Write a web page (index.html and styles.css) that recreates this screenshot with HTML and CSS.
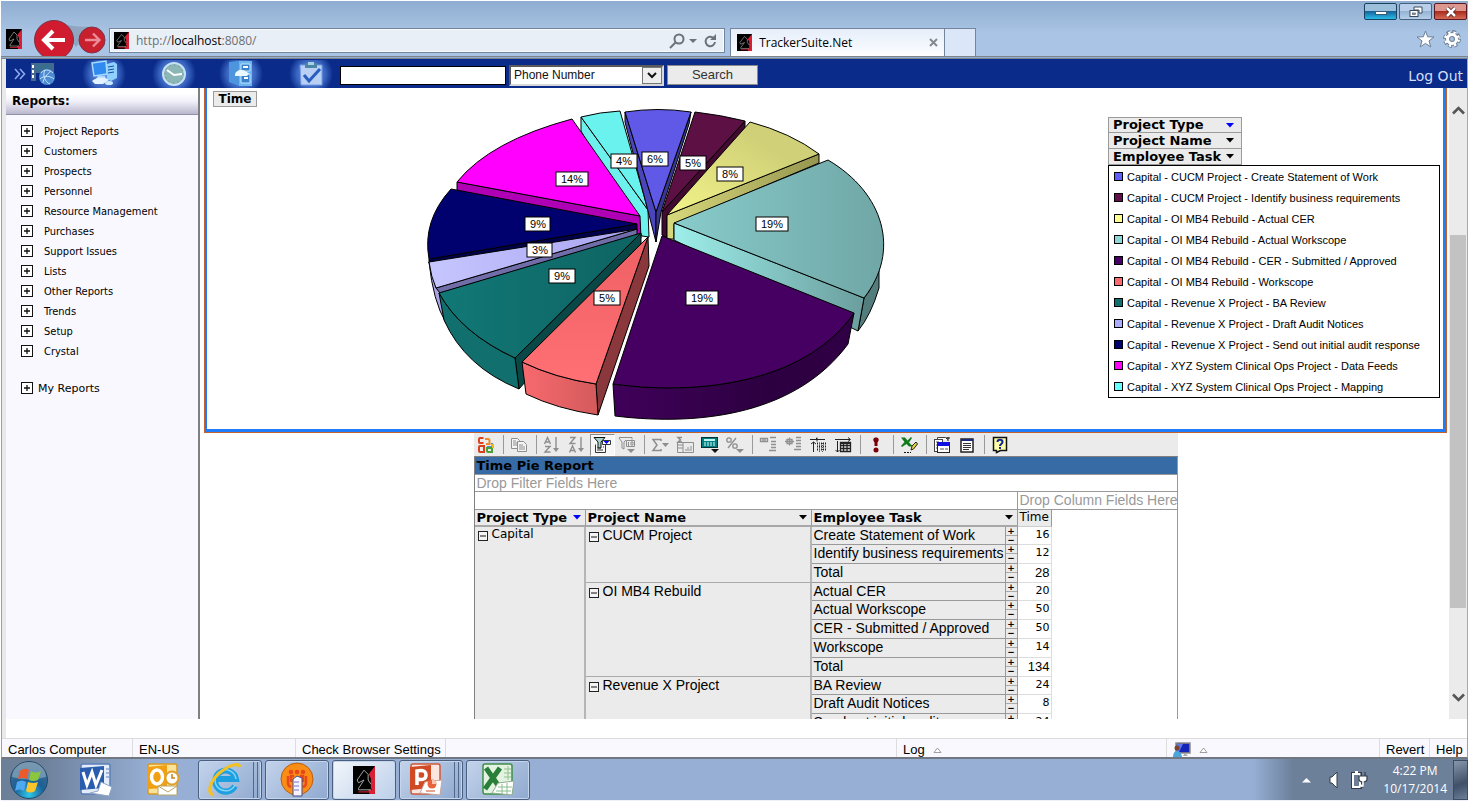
FILE: index.html
```html
<!DOCTYPE html>
<html lang="en">
<head>
<meta charset="utf-8">
<title>TrackerSuite.Net</title>
<link rel="stylesheet" href="styles.css">
</head>
<body>
<svg class="defs" aria-hidden="true">
  <symbol id="knight" viewBox="0 0 16 20">
    <rect width="16" height="20" fill="#000"/><path d="M16 0L9 9l3 11h4z" fill="#d81f33"/>
    <path d="M4 17c0-3 3-4 3-7l-3 2-1-2 3-5 2-2 3 2 2 4v7l1 1H4z" fill="#000"/>
    <path d="M8 3L3 10l1 2 4-2-4 6v1h9M8 3l3 3v4l2 3" fill="none" stroke="#a8a8a8" stroke-width=".7"/>
    <path d="M4 18.500h9" stroke="#d81f33" stroke-width=".8"/>
  </symbol>
  <symbol id="plus" viewBox="0 0 12 12"><rect x=".5" y=".5" width="11" height="11" fill="#fff" stroke="#111"/><path d="M3 6h6M6 3v6" stroke="#111" stroke-width="1.300"/></symbol>
  <symbol id="minus" viewBox="0 0 10 10"><rect x=".5" y=".5" width="9" height="9" fill="#f4f4f4" stroke="#222"/><path d="M2 5h6" stroke="#111"/></symbol>
  <symbol id="down" viewBox="0 0 8 5"><path d="M0 0h8L4 4.500z" fill="currentColor"/></symbol>
  <symbol id="updelta" viewBox="0 0 9 6"><path d="M1 5.500h7L4.500 1z" fill="#fff" stroke="#888" stroke-width=".8"/></symbol>
</svg>

<header class="browser">
  <div class="window-row">
    <button class="win win-min" aria-label="Minimize"><svg width="14" height="8" viewBox="0 0 14 8"><rect x="1.500" y="3.500" width="11" height="3" fill="#fff" stroke="#3b5a78"/></svg></button>
    <button class="win win-max" aria-label="Restore"><svg width="14" height="12" viewBox="0 0 14 12"><path d="M5 1h8v6h-3V4H5z" fill="#fff" stroke="#3c4a5c"/><rect x="1" y="4.500" width="8" height="6" fill="#fff" stroke="#3c4a5c"/><rect x="3.500" y="7" width="3" height="1.500" fill="#9ab" stroke="#3c4a5c" stroke-width=".6"/></svg></button>
    <button class="win win-close" aria-label="Close"><svg width="14" height="12" viewBox="0 0 14 12"><path d="M3 2l8 8M11 2l-8 8" stroke="#4a2020" stroke-width="4"/><path d="M3 2l8 8M11 2l-8 8" stroke="#fff" stroke-width="2.500"/></svg></button>
  </div>
  <div class="nav-row">
    <svg class="site-icon" width="16" height="20"><use href="#knight"/></svg>
    <svg class="nav-buttons" width="74" height="36" viewBox="0 0 74 36" role="img" aria-label="Back and forward">
      <path d="M24 1c12 7 23 5 35 6l-17 20z" fill="#90a5bf"/>
      <circle cx="20" cy="20" r="19.500" fill="#d01c2e" stroke="#7c3347"/>
      <path d="M31 20H11M19 11l-9 9 9 9" fill="none" stroke="#fff" stroke-width="4"/>
      <circle cx="58" cy="20" r="13" fill="#c8202f" stroke="#7c3347"/>
      <path d="M51 20h14M59 13.500l6.500 6.500-6.500 6.500" fill="none" stroke="#ec8d96" stroke-width="2.400"/>
    </svg>
    <form class="address">
      <svg width="15" height="17" viewBox="0 0 16 20" preserveAspectRatio="none"><use href="#knight"/></svg>
      <a class="url" href="#"><span>http://</span><b>localhost</b><span>:8080/</span></a>
      <svg width="50" height="18" viewBox="0 0 50 18" fill="none" stroke="#6d7178" stroke-width="2"><circle cx="11" cy="7" r="4.500"/><path d="M8 10l-6 6"/><path d="M21 7h8l-4 4z" fill="#6d7178" stroke="none"/><path d="M45.500 6A4.700 4.700 0 1 0 47 10"/><path d="M48 2v6h-6z" fill="#6d7178" stroke="none"/></svg>
    </form>
    <div class="tab">
      <svg width="15" height="17" viewBox="0 0 16 20" preserveAspectRatio="none"><use href="#knight"/></svg>
      <span>TrackerSuite.Net</span>
      <button class="tab-close" aria-label="Close tab"><svg width="9" height="9" viewBox="0 0 9 9"><path d="M1 1l7 7M8 1L1 8" stroke="#85898f" stroke-width="2"/></svg></button>
    </div>
    <button class="new-tab" aria-label="New tab"></button>
    <div class="tools">
      <svg width="19" height="18" viewBox="0 0 19 18"><path d="M9.500 1l2.200 5.800 6.300.2-5 3.900 1.800 6-5.300-3.500-5.300 3.500 1.800-6L1 7l6.300-.2z" fill="#fff" stroke="#6c7f96"/></svg>
      <svg width="18" height="18" viewBox="0 0 18 18"><circle cx="9" cy="9" r="6.700" fill="none" stroke="#6c7f96" stroke-width="4.400" stroke-dasharray="3.400 1.860"/><circle cx="9" cy="9" r="4.400" fill="none" stroke="#6c7f96" stroke-width="5"/><circle cx="9" cy="9" r="6.500" fill="none" stroke="#fff" stroke-width="3" stroke-dasharray="2.200 2.905" stroke-dashoffset="-.6"/><circle cx="9" cy="9" r="4.500" fill="none" stroke="#fff" stroke-width="3"/></svg>
    </div>
  </div>
</header>

<div class="app">
  <div class="app-bar">
    <button class="ico w20" aria-label="Expand"><svg width="12" height="12" viewBox="0 0 12 12"><path d="M1 1l4.500 5L1 11M6 1l4.500 5L6 11" fill="none" stroke="#8fa8ec" stroke-width="1.600"/></svg></button>
    <button class="ico w26" aria-label="Projects"><svg width="26" height="26" viewBox="0 0 26 26"><path d="M1 2h23v10H6v8H1z" fill="#47698f"/><path d="M5 3h17l-2 8H7z" fill="#3a6d8f"/><path d="M3 4v15" stroke="#fff" stroke-width="2" stroke-dasharray="3 2"/><circle cx="17" cy="16" r="8" fill="#4d8ad0"/><path d="M11 12c3-4 8-4 12 0M10 18c4-4 11-3 14 0M15 9c-3 5 0 12 5 14M21 10c-4 3-8 8-8 12" fill="none" stroke="#c4e4ff"/></svg></button>
    <button class="ico lit w96" aria-label="Customers"><svg width="30" height="28" viewBox="0 0 30 28"><path d="M3 3l14-2 1 13-13 2z" fill="#2f8bf0" stroke="#a8dcff" stroke-width="1.500"/><path d="M18 4l7-2 3 2v14l-6 3-4-2z" fill="#8fd2ff"/><path d="M19 7l6-1M19 10l6-1M19 13l6-1" stroke="#164d9d"/><path d="M9 16h7l1 3H7z" fill="#b4dcff"/><path d="M3 21c5-4 13-4 17-1l-6 4H6z" fill="#e2f3ff"/><ellipse cx="20" cy="23" rx="4" ry="2" fill="#cbe9ff"/></svg></button>
    <button class="ico lit w44" aria-label="Time"><svg width="26" height="26" viewBox="0 0 26 26"><circle cx="13" cy="13" r="11" fill="#8db7b6" stroke="#c5e1f4" stroke-width="2"/><circle cx="13" cy="13" r="9" fill="none" stroke="#5b8797" stroke-dasharray="1 3.700"/><path d="M6 9l7 5 8-1" fill="none" stroke="#fff" stroke-width="2"/></svg></button>
    <button class="ico lit w90" aria-label="Documents"><svg width="28" height="28" viewBox="0 0 28 28"><path d="M2 2l10-1v25l-10-4z" fill="#4d96dd"/><path d="M12 1h13v25H12z" fill="#6cb5ed"/><path d="M14 4h9v7h-9zM14 14h9v9h-9z" fill="#3982cb" stroke="#c4e7ff"/><path d="M16 7h5M17 18h4" stroke="#fff" stroke-width="2"/><path d="M8 15c0-3 3-5 6-5 4 0 6 2 8 4l-2 2H8z" fill="#e9f8ff"/></svg></button>
    <button class="ico lit w50" aria-label="Tasks"><svg width="26" height="26" viewBox="0 0 26 26"><path d="M2 4h22v20H3z" fill="#b9cff3" stroke="#6f9be3"/><path d="M7 2h12v5H7z" fill="#4d86a4"/><path d="M10 1h6v3h-6z" fill="#a7d2e4"/><path d="M6 14l5 6L22 8" fill="none" stroke="#275dc0" stroke-width="3"/></svg></button>
    <input class="search-text" type="text" aria-label="Search text">
    <div class="select-wrap">
      <select aria-label="Search field"><option>Phone Number</option></select>
      <span class="select-arrow"><svg width="10" height="7" viewBox="0 0 10 7"><path d="M1 1l4 4 4-4" fill="none" stroke="#111" stroke-width="2"/></svg></span>
    </div>
    <button class="search-button">Search</button>
    <a class="logout" href="#">Log Out</a>
  </div>

  <div class="main">
    <nav class="sidebar">
      <h2>Reports:</h2>
      <ul>
        <li><button aria-label="Expand"><svg><use href="#plus"/></svg></button><a href="#">Project Reports</a></li>
        <li><button aria-label="Expand"><svg><use href="#plus"/></svg></button><a href="#">Customers</a></li>
        <li><button aria-label="Expand"><svg><use href="#plus"/></svg></button><a href="#">Prospects</a></li>
        <li><button aria-label="Expand"><svg><use href="#plus"/></svg></button><a href="#">Personnel</a></li>
        <li><button aria-label="Expand"><svg><use href="#plus"/></svg></button><a href="#">Resource Management</a></li>
        <li><button aria-label="Expand"><svg><use href="#plus"/></svg></button><a href="#">Purchases</a></li>
        <li><button aria-label="Expand"><svg><use href="#plus"/></svg></button><a href="#">Support Issues</a></li>
        <li><button aria-label="Expand"><svg><use href="#plus"/></svg></button><a href="#">Lists</a></li>
        <li><button aria-label="Expand"><svg><use href="#plus"/></svg></button><a href="#">Other Reports</a></li>
        <li><button aria-label="Expand"><svg><use href="#plus"/></svg></button><a href="#">Trends</a></li>
        <li><button aria-label="Expand"><svg><use href="#plus"/></svg></button><a href="#">Setup</a></li>
        <li><button aria-label="Expand"><svg><use href="#plus"/></svg></button><a href="#">Crystal</a></li>
        <li class="mine"><button aria-label="Expand"><svg><use href="#plus"/></svg></button><a href="#">My Reports</a></li>
      </ul>
    </nav>

    <div class="content">
      <section class="chart">
        <button class="field time-field">Time</button>
        <svg class="pie" width="470" height="332" viewBox="421 92 470 332" role="img" aria-label="Time by task pie chart">
          <defs>
            <linearGradient id="gPurple"><stop offset="0" stop-color="#40005a"/><stop offset=".65" stop-color="#2c0040"/><stop offset="1" stop-color="#300045"/></linearGradient>
            <linearGradient id="gAqua"><stop offset="0" stop-color="#88cccb"/><stop offset="1" stop-color="#70a6a6"/></linearGradient>
            <linearGradient id="gAquaSide"><stop offset="0" stop-color="#9deeea"/><stop offset="1" stop-color="#6b9e9e"/></linearGradient>
            <linearGradient id="gYellow" x1="0" y1="1" x2="1" y2="0"><stop offset="0" stop-color="#f4f48a"/><stop offset=".7" stop-color="#d0d078"/></linearGradient>
            <linearGradient id="gYellowSide"><stop offset="0" stop-color="#d8d87c"/><stop offset="1" stop-color="#96964f"/></linearGradient>
            <linearGradient id="gLav"><stop offset="0" stop-color="#c6c6ff"/><stop offset="1" stop-color="#a9a4f0"/></linearGradient>
            <linearGradient id="gSalmon" x1="0" y1="0" x2="0" y2="1"><stop offset="0" stop-color="#ee6064"/><stop offset="1" stop-color="#ff7074"/></linearGradient>
            <linearGradient id="gSalmonWall"><stop offset="0" stop-color="#f86a6e"/><stop offset="1" stop-color="#d35a5c"/></linearGradient>
            <linearGradient id="gTeal"><stop offset="0" stop-color="#117876"/><stop offset="1" stop-color="#0e6462"/></linearGradient>
          </defs>
          <g stroke="#000" stroke-width="1" stroke-linejoin="round">
            <path d="M582 117L649 210L650 237L643 236L582 131z" fill="#6ef0ec"/>
            <path d="M582 117Q601 112 621 111L649 210z" fill="#6af2ee"/>
            <path d="M626 112L657 212V242L626 122z" fill="#4a45ba"/>
            <path d="M692 112L657 212V242L662 212L690 124z" fill="#393692"/>
            <path d="M626 112Q659 107 692 112L657 212z" fill="#6059e8"/>
            <path d="M746 121V129L668 217V238L663 235V212z" fill="#420a30"/>
            <path d="M696 112Q722 115 746 121L663 212z" fill="#5c1044"/>
            <path d="M668 215L820 154V163L675 224V239H668z" fill="url(#gYellowSide)"/>
            <path d="M668 215L751 122Q792 133 820 154z" fill="url(#gYellow)"/>
            <path d="M865 298Q874 288 880 267V288Q872 315 859 331z" fill="#527d7c"/>
            <path d="M675 223L865 298L859 331L675 240z" fill="url(#gAquaSide)"/>
            <path d="M675 223L829 160C885 193 902 251 865 298z" fill="url(#gAqua)"/>
            <path d="M458 182L641 216L642 238L458 190z" fill="#b000b5"/>
            <path d="M458 182Q491 141 573 119L641 216z" fill="#ff00ff"/>
            <path d="M430 259L638 224V231L430 263z" fill="#00004b"/>
            <path d="M452 189L638 224L430 259Q423 221 452 189z" fill="#00006e"/>
            <path d="M430 262L437 288L441 292L447 323Q434 301 430 262z" fill="#a8a4e6"/>
            <path d="M437 288L638 229V235L441 293z" fill="#706da8"/>
            <path d="M430 262L638 229L437 288Q432 277 430 262z" fill="url(#gLav)"/>
            <path d="M516 358L642 233V250L520 389z" fill="#0a4847"/>
            <path d="M440 293Q462 333 516 358L520 389Q466 367 445 320z" fill="#11706e"/>
            <path d="M440 293L642 233L516 358Q462 333 440 293z" fill="url(#gTeal)"/>
            <path d="M597 384L649 237L650 266L599 415z" fill="#8a383b"/>
            <path d="M523 362Q556 378 597 384L599 415Q558 409 527 394z" fill="url(#gSalmonWall)"/>
            <path d="M649 237L523 362Q556 378 597 384z" fill="url(#gSalmon)"/>
            <path d="M614 384C711 397 810 378 855 313L849 344C799 412 706 427 616 416z" fill="url(#gPurple)"/>
            <path d="M663 236L855 313C810 378 711 397 614 384z" fill="#450062"/>
          </g>
          <g class="pie-tags">
            <rect x="612" y="154" width="26" height="14"/><text x="625" y="165">4%</text>
            <rect x="643" y="152" width="26" height="14"/><text x="656" y="163">6%</text>
            <rect x="681" y="156" width="26" height="14"/><text x="694" y="167">5%</text>
            <rect x="718" y="167" width="26" height="14"/><text x="731" y="178">8%</text>
            <rect x="757" y="217" width="32" height="14"/><text x="773" y="228">19%</text>
            <rect x="687" y="291" width="32" height="14"/><text x="703" y="302">19%</text>
            <rect x="557" y="172" width="32" height="14"/><text x="573" y="183">14%</text>
            <rect x="526" y="217" width="25" height="14"/><text x="539" y="228">9%</text>
            <rect x="528" y="243" width="25" height="14"/><text x="541" y="254">3%</text>
            <rect x="550" y="269" width="26" height="14"/><text x="563" y="280">9%</text>
            <rect x="595" y="291" width="26" height="14"/><text x="608" y="302">5%</text>
          </g>
        </svg>
        <div class="legend">
          <div class="legend-fields">
            <button class="field">Project Type<svg class="arrow blue"><use href="#down"/></svg></button>
            <button class="field">Project Name<svg class="arrow"><use href="#down"/></svg></button>
            <button class="field">Employee Task<svg class="arrow"><use href="#down"/></svg></button>
          </div>
          <ul class="legend-list">
            <li><i class="k1"></i>Capital - CUCM Project - Create Statement of Work</li>
            <li><i class="k2"></i>Capital - CUCM Project - Identify business requirements</li>
            <li><i class="k3"></i>Capital - OI MB4 Rebuild - Actual CER</li>
            <li><i class="k4"></i>Capital - OI MB4 Rebuild - Actual Workscope</li>
            <li><i class="k5"></i>Capital - OI MB4 Rebuild - CER - Submitted / Approved</li>
            <li><i class="k6"></i>Capital - OI MB4 Rebuild - Workscope</li>
            <li><i class="k7"></i>Capital - Revenue X Project - BA Review</li>
            <li><i class="k8"></i>Capital - Revenue X Project - Draft Audit Notices</li>
            <li><i class="k9"></i>Capital - Revenue X Project - Send out initial audit response</li>
            <li><i class="k10"></i>Capital - XYZ System Clinical Ops Project - Data Feeds</li>
            <li><i class="k11"></i>Capital - XYZ System Clinical Ops Project - Mapping</li>
          </ul>
        </div>
      </section>

      <section class="pivot">
        <div class="pivot-tools">
          <button aria-label="About"><svg width="18" height="18" viewBox="0 0 18 18" fill="none" stroke-width="2"><path d="M6.500 2H3q-1 0-1 1v3q0 1 1 1h3.500" stroke="#e0431f"/><path d="M8 3h3q1.500 0 1.500 1.500V8H9" stroke="#f08a24"/><path d="M7 10H3q-1 0-1 1v4q0 1 1 1h4z" stroke="#d8411b"/><path d="M10 11h4M15 7v4" stroke="#3f8fe0"/><path d="M10 12v3q0 1 1 1h4v-4z" stroke="#4aa33a"/><path d="M14 9h2v3" stroke="#f4b81c"/></svg></button><i class="sep"></i>
          <button aria-label="Copy"><svg width="18" height="18" viewBox="0 0 18 18" fill="#f4f4f4" stroke="#8e8e8e"><path d="M1.500 2.500h6l2 2v8h-8z"/><path d="M7.500 5.500h6l3 3v7h-9z"/><path d="M3 5h3M3 7h4M3 9h4M9 9h4M9 11h6M9 13h6"/></svg></button><i class="sep"></i>
          <button aria-label="Sort ascending"><svg width="18" height="18" viewBox="0 0 18 18" fill="none" stroke="#8e8e8e" stroke-width="1.400"><path d="M1.500 8l3-6.500L7.500 8M2.500 6h4M2 10.500h5l-5 5.500h5.500M13 1v12"/><path d="M10 12h6l-3 4z" fill="#8e8e8e" stroke="none"/></svg></button>
          <button aria-label="Sort descending"><svg width="18" height="18" viewBox="0 0 18 18" fill="none" stroke="#8e8e8e" stroke-width="1.400"><path d="M2 1.500h5L2 7.500h5.500M1.500 16.500l3-6.500 3 6.500M2.500 14.500h4M13 1v12"/><path d="M10 12h6l-3 4z" fill="#8e8e8e" stroke="none"/></svg></button>
          <button class="on" aria-label="AutoFilter"><svg width="18" height="18" viewBox="0 0 18 18"><path d="M1 1.500h11L8 6v6H5V6z" fill="#a9d2cc" stroke="#111"/><path d="M9.500 4.500h8v4h-8z" fill="#fff" stroke="#333"/><path d="M10.500 5h6l-3 3z" fill="#00f"/><path d="M2.500 8.500v8h10v-8" fill="none" stroke="#333"/><path d="M4 12h4M4 14h6M10 11h1" stroke="#333"/></svg></button>
          <button aria-label="Show top"><svg width="18" height="18" viewBox="0 0 18 18" fill="none" stroke="#8e8e8e"><path d="M1 1.500h13v2M1 2l3 4v6l2 1V6l2-2"/><path d="M8.500 4.500h8v6h-8zM10.500 6v4M13 6h2v3h-2z"/><path d="M9 13h8l-4 4z" fill="#8e8e8e" stroke="none"/></svg></button><i class="sep"></i>
          <button aria-label="AutoCalc"><svg width="18" height="18" viewBox="0 0 18 18"><path d="M10 5V3.500H2L6 9l-4 5.500h8V13" fill="none" stroke="#8e8e8e" stroke-width="1.500"/><path d="M11 7h7l-3.500 4z" fill="#8e8e8e"/></svg></button>
          <button aria-label="Subtotal"><svg width="18" height="18" viewBox="0 0 18 18" fill="none" stroke="#8e8e8e"><path d="M1.500 6.500h16v10h-16zM2 9h5M2 12h5M7 7v9"/><path d="M6 1.500H2L4.500 4 2 6h4" stroke-width="1.500"/><path d="M9 14h7M12 13v-2M15 13v-3"/></svg></button>
          <button aria-label="Calculated totals"><svg width="20" height="18" viewBox="0 0 20 18"><rect x="1.500" y="1.500" width="16" height="10" fill="#008080" stroke="#033"/><path d="M4 4h11" stroke="#bff5ef" stroke-width="2"/><path d="M4 7h11M4 9h11" stroke="#dff" stroke-dasharray="2 1"/><path d="M11 13h8l-4 4z" fill="#111"/></svg></button>
          <button aria-label="Show as"><svg width="20" height="18" viewBox="0 0 20 18" fill="none" stroke="#8e8e8e" stroke-width="1.300"><circle cx="4" cy="4" r="2.200"/><circle cx="10" cy="10" r="2.200"/><path d="M11 2L3 12"/><path d="M11 13h8l-4 4z" fill="#8e8e8e" stroke="none"/></svg></button><i class="sep"></i>
          <button aria-label="Collapse"><svg width="18" height="18" viewBox="0 0 18 18" fill="none" stroke="#909090"><path d="M1.500 2.500h7v3h-7zM4 3v2M6 3v2M11 1.500h6M12 5.500h5M12 8.500h5M12 11.500h5M10 14.500h7" stroke-width="1.300"/></svg></button>
          <button aria-label="Expand"><svg width="18" height="18" viewBox="0 0 18 18" fill="none" stroke="#909090"><path d="M1 5.500h9M5.500 1.500v8M3 3.500h5v4H3zM12 1.500h5M12 4.500h5M12 7.500h5M12 10.500h5M10 13.500h7" stroke-width="1.300"/></svg></button>
          <button aria-label="Hide details"><svg width="18" height="18" viewBox="0 0 18 18" fill="none" stroke="#222"><path d="M1 3.500h15M4.500 6v10M2 8l2.500-2L7 8"/><path d="M8 1.500v4M6.500 3.500l1.500-1.500"/><path d="M8 7.500h9M8 10.500h9M8 13.500h9" stroke-width="2" stroke-dasharray="1 1"/><path d="M10.500 7v9M13.500 7v9" stroke="#555" stroke-dasharray="1 1"/></svg></button>
          <button aria-label="Show details"><svg width="18" height="18" viewBox="0 0 18 18" fill="none" stroke="#222"><path d="M1 3.500h15M3.500 5v11M1.500 14l2 2 2-2M14 1.500l2.500 2-2.500 2"/><path d="M6.500 6.500h10v9h-10zM6 9.500h10M6 12.500h10M9.500 6v10M13 6v10" stroke-width="1.300"/><path d="M6 7h10" stroke-width="2"/></svg></button><i class="sep"></i>
          <button aria-label="Refresh"><svg width="10" height="18" viewBox="0 0 10 18"><path d="M5 1.500c3 0 3.500 2.500 1.500 5V10h-3V6.500C1.500 4 2 1.500 5 1.500z" fill="#7a0008"/><circle cx="5" cy="14" r="2.500" fill="#7a0008"/></svg></button><i class="sep"></i>
          <button aria-label="Export to Excel"><svg width="18" height="18" viewBox="0 0 18 18"><path d="M1 1.500h4l2.500 3L11 1l1 1-3 4.500 4 4H9L6.500 8 2 11l-1-1 3.500-4z" fill="#117a1c"/><path d="M11 14l1-4 4-4 1.500 2-4 5z" fill="#e8d23b" stroke="#222"/><path d="M4 16.500h7" stroke="#111" stroke-dasharray="2 1"/></svg></button><i class="sep"></i>
          <button aria-label="Field list"><svg width="18" height="18" viewBox="0 0 18 18"><path d="M1.500 4.500h3v-3h8l2 2" fill="#fff" stroke="#444"/><rect x="1.500" y="3.500" width="8" height="12" fill="#fff" stroke="#444"/><path d="M3 6h3M3 9h2M3 12h2" stroke="#555"/><rect x="4.500" y="6.500" width="12" height="10" fill="#fff" stroke="#222"/><path d="M4 8h13" stroke="#1010e0" stroke-width="4"/><path d="M7 13h8" stroke="#555" stroke-dasharray="4 1"/><path d="M13 2h4M15 1v4" stroke="#111"/></svg></button>
          <button aria-label="Commands"><svg width="14" height="16" viewBox="0 0 14 16"><rect x="1" y="2" width="12" height="13" fill="#fff" stroke="#222" stroke-width="1.500"/><path d="M1 3h12" stroke="#1a2a7a" stroke-width="2"/><path d="M3 6.500h8M3 8.500h8M3 10.500h8M3 12.500h6" stroke="#333"/></svg></button><i class="sep"></i>
          <button aria-label="Help"><svg width="16" height="18" viewBox="0 0 16 18"><path d="M1.500 1.500h13v13h-6l-4 2v-2h-3z" fill="#ffffa8" stroke="#111" stroke-width="1.500"/><path d="M5.500 6c0-3 5-3 5 0 0 2-2.500 2-2.500 4M8 11v2" fill="none" stroke="#12259a" stroke-width="2"/></svg></button>
        </div>
        <table>
          <colgroup><col class="c-type"><col class="c-name"><col class="c-task"><col class="c-pm"><col class="c-time"><col></colgroup>
          <thead>
            <tr class="title"><th colspan="6">Time Pie Report</th></tr>
            <tr class="drop"><td colspan="6">Drop Filter Fields Here</td></tr>
            <tr class="drop cols"><td colspan="4"></td><td colspan="2">Drop Column Fields Here</td></tr>
            <tr class="heads">
              <th><div>Project Type<svg class="arrow blue"><use href="#down"/></svg></div></th>
              <th><div>Project Name<svg class="arrow"><use href="#down"/></svg></div></th>
              <th colspan="2"><div>Employee Task<svg class="arrow"><use href="#down"/></svg></div></th>
              <td class="time">Time</td><td class="rest"></td>
            </tr>
          </thead>
          <tbody>
            <tr class="first"><td class="type" rowspan="11"><button aria-label="Collapse"><svg><use href="#minus"/></svg></button>Capital</td><td class="name" rowspan="3"><button aria-label="Collapse"><svg><use href="#minus"/></svg></button>CUCM Project</td><td class="member">Create Statement of Work</td><td class="pm"><button>+</button><button>−</button></td><td class="num">16</td><td class="rest" rowspan="11"></td></tr>
            <tr><td class="member">Identify business requirements</td><td class="pm"><button>+</button><button>−</button></td><td class="num">12</td></tr>
            <tr><td class="member">Total</td><td class="pm"><button>+</button><button>−</button></td><td class="num total">28</td></tr>
            <tr class="first"><td class="name" rowspan="5"><button aria-label="Collapse"><svg><use href="#minus"/></svg></button>OI MB4 Rebuild</td><td class="member">Actual CER</td><td class="pm"><button>+</button><button>−</button></td><td class="num">20</td></tr>
            <tr><td class="member">Actual Workscope</td><td class="pm"><button>+</button><button>−</button></td><td class="num">50</td></tr>
            <tr><td class="member">CER - Submitted / Approved</td><td class="pm"><button>+</button><button>−</button></td><td class="num">50</td></tr>
            <tr><td class="member">Workscope</td><td class="pm"><button>+</button><button>−</button></td><td class="num">14</td></tr>
            <tr><td class="member">Total</td><td class="pm"><button>+</button><button>−</button></td><td class="num total">134</td></tr>
            <tr class="first"><td class="name" rowspan="3"><button aria-label="Collapse"><svg><use href="#minus"/></svg></button>Revenue X Project</td><td class="member">BA Review</td><td class="pm"><button>+</button><button>−</button></td><td class="num">24</td></tr>
            <tr><td class="member">Draft Audit Notices</td><td class="pm"><button>+</button><button>−</button></td><td class="num">8</td></tr>
            <tr><td class="member">Send out initial audit</td><td class="pm"><button>+</button><button>−</button></td><td class="num">24</td></tr>
          </tbody>
        </table>
      </section>
    </div>

    <div class="scrollbar">
      <button aria-label="Scroll up"><svg width="13" height="9" viewBox="0 0 13 9"><path d="M1 7.500l5.500-5.500L12 7.500" fill="none" stroke="#555" stroke-width="2.600"/></svg></button>
      <i class="before"></i><i class="thumb"></i><i class="after"></i>
      <button aria-label="Scroll down"><svg width="13" height="9" viewBox="0 0 13 9"><path d="M1 1.500l5.500 5.500L12 1.500" fill="none" stroke="#555" stroke-width="2.600"/></svg></button>
    </div>
  </div>
</div>

<footer class="status">
  <span class="s1">Carlos Computer</span>
  <span class="s2">EN-US</span>
  <span class="s3">Check Browser Settings</span>
  <span class="s4"></span>
  <span class="s5">Log <svg width="9" height="6"><use href="#updelta"/></svg></span>
  <span class="s6"><svg width="18" height="15" viewBox="0 0 18 15"><rect x="3" y="1" width="14" height="10" fill="#1424b8" stroke="#8e8f86" stroke-width="1.500"/><path d="M4 2h6l-4 8H4z" fill="#5b75f0"/><path d="M12 11l3 3h-5z" fill="#aaa"/><circle cx="4" cy="6" r="2.500" fill="#7a4528"/><path d="M0 15c0-8 8-8 9 0z" fill="#4aa6da"/></svg><svg width="9" height="6"><use href="#updelta"/></svg></span>
  <a class="s7" href="#">Revert</a>
  <a class="s8" href="#">Help</a>
</footer>

<div class="taskbar">
  <button class="start" aria-label="Start"><svg width="40" height="40" viewBox="0 0 40 40">
    <defs><radialGradient id="orb" cx=".5" cy=".9" r=".9"><stop offset="0" stop-color="#2ec8ea"/><stop offset=".45" stop-color="#1b6098"/><stop offset="1" stop-color="#4a6f8d"/></radialGradient></defs>
    <circle cx="20" cy="20" r="18.500" fill="url(#orb)" stroke="#274a6b"/><path d="M3 17a17 15 0 0 1 34 0q-17 5-34 0z" fill="#b8cbd8" opacity=".45"/>
    <path d="M11 11q5-4 9-1l-2 9q-4-2-9 0z" fill="#ec5a2b"/><path d="M22 11q5 3 10 0l-3 9q-5 2-9 0z" fill="#8cc63f"/><path d="M8 22q5-3 9 0l-2 9q-5-3-9 0z" fill="#4fa8f0"/><path d="M19 22q5 2 10 0l-3 9q-5 3-9 0z" fill="#fcc52c"/></svg></button>
  <button class="pin" aria-label="Word"><svg width="34" height="34" viewBox="0 0 34 34"><rect x="2" y="1" width="29" height="30" rx="2" fill="#e3ecf8" stroke="#5b7fb8" stroke-width="1.500"/><path d="M1 5l24-2v22L1 27z" fill="#2b5daf"/><path d="M4 9l4 13 5-13 4 13 6-15" fill="none" stroke="#fff" stroke-width="3"/><path d="M27 6h3M27 10h3M27 14h3" stroke="#5d83bd"/><path d="M22 19l11 5-3 9-19-3 8-2z" fill="#fff" stroke="#8fa5c8"/></svg></button>
  <button class="pin last" aria-label="Outlook"><svg width="34" height="34" viewBox="0 0 34 34"><rect x="2" y="1" width="29" height="30" rx="2" fill="#fbe29a" stroke="#d99a1c" stroke-width="1.500"/><path d="M1 4l20-2v23L1 26z" fill="#f0a012"/><ellipse cx="11" cy="14" rx="5.500" ry="7" fill="none" stroke="#fff" stroke-width="3.500"/><path d="M12 23h19v9H12z" fill="#fff" stroke="#b9a46b"/><path d="M12 23l10 6 9-6" fill="none" stroke="#b9a46b"/><circle cx="26" cy="15" r="6.500" fill="#fff" stroke="#e0a02c" stroke-width="2"/><path d="M26 11v4h3" fill="none" stroke="#c5831b" stroke-width="1.500"/></svg></button>
  <button class="task stack" aria-label="Internet Explorer"><svg width="34" height="36" viewBox="0 0 34 36"><path d="M27 24a10.500 10.500 0 1 1 1-7H10" fill="none" stroke="#1e9fe0" stroke-width="6"/><path d="M27 23a10.500 10.500 0 1 1 1-6" fill="none" stroke="#7fd6fa" stroke-width="1.500"/><path d="M5 33C-2 30 3 17 14 9c9-7 17-8 18-4" fill="none" stroke="#f4c022" stroke-width="3"/></svg></button>
  <button class="task" aria-label="Remote tool"><svg width="34" height="36" viewBox="0 0 34 36"><circle cx="17" cy="17" r="16" fill="#f98d16" stroke="#b65f10"/><g fill="#e8471b"><circle cx="11" cy="10" r="2.300"/><circle cx="17" cy="10" r="2.300"/><circle cx="23" cy="10" r="2.300"/></g><path d="M8 14v7q0 3 3 4M14 14h-3v6M26 14v7q0 3-3 4M20 14h3v6" fill="none" stroke="#e8471b" stroke-width="2.500"/><path d="M13 17l4-3 5 2v18h-9z" fill="#f4f3ff" stroke="#444b85"/><path d="M14 20h5M14 24h5M14 28h5" stroke="#77c"/></svg></button>
  <button class="task active" aria-label="TrackerSuite"><svg width="22" height="28" viewBox="0 0 16 20" preserveAspectRatio="none"><use href="#knight"/></svg></button>
  <button class="task stack" aria-label="PowerPoint"><svg width="34" height="34" viewBox="0 0 34 34"><rect x="2" y="1" width="29" height="30" rx="2" fill="#fbe6df" stroke="#d0583a" stroke-width="1.500"/><path d="M1 4l21-2v23L1 27z" fill="#d04a25"/><path d="M8 22V8q9-2 9 4t-9 4" fill="none" stroke="#fff" stroke-width="3.500"/><path d="M16 19l17-2-2 15-20-2z" fill="#fff" stroke="#c6a79d"/><circle cx="23" cy="21" r="4.500" fill="#e8623c"/><path d="M23 21h4.500a4.500 4.500 0 0 0-4.500-4.500z" fill="#fbc4ae"/><path d="M17 28h9" stroke="#d04a25"/></svg></button>
  <button class="task" aria-label="Excel"><svg width="34" height="34" viewBox="0 0 34 34"><rect x="2" y="1" width="29" height="30" rx="2" fill="#e4f2e2" stroke="#3f8f48" stroke-width="1.500"/><path d="M23 6h7M23 10h7M23 14h7M27 3v14" stroke="#8cc28c"/><path d="M5 5l14 20M19 5L4 26" stroke="#2a7f38" stroke-width="5"/><path d="M17 20l16-2-2 14-20-2z" fill="#fff" stroke="#8cae8d"/><path d="M17 24h14M15 28h15M21 21v10M26 20v11" stroke="#8cbd8e"/></svg></button>
  <div class="tray">
    <svg width="9" height="6" viewBox="0 0 9 6"><path d="M0 5.500L4.500 1 9 5.500z" fill="#fff"/></svg>
    <svg class="speaker" width="9" height="18" viewBox="0 0 9 18"><path d="M1 6h2l5-5v16l-5-5H1z" fill="#fff" stroke="#333c4a"/></svg>
    <svg width="17" height="20" viewBox="0 0 17 20"><path d="M2 4h7v13H2z" fill="none" stroke="#333c4a" stroke-width="4"/><path d="M2 4h7v13H2z" fill="#6d7e95" stroke="#fff" stroke-width="2"/><path d="M4 2h3" stroke="#fff" stroke-width="2"/><path d="M8 6h8v3q0 3-4 3t-4-3zM10 2v4M14 2v4M12 12v5H9" fill="#fff" stroke="#333c4a" stroke-width="1.200"/><path d="M12 11v5H8" fill="none" stroke="#fff" stroke-width="1.500"/></svg>
    <time>4:22 PM<br>10/17/2014</time>
    <button class="desktop" aria-label="Show desktop"></button>
  </div>
</div>
</body>
</html>
```

FILE: styles.css
```css
* { box-sizing: border-box; }
html, body { height: 100%; }
body { margin: 0; padding: 1px 2px 0 1px; display: flex; flex-direction: column; background: #fff; color: #000; font-family: "Liberation Sans", Arial, sans-serif; font-size: 13px; overflow: hidden; }
button { padding: 0; margin: 0; border: 0; background: none; font: inherit; color: inherit; }
a { color: inherit; text-decoration: none; }
ul { list-style: none; margin: 0; padding: 0; }
svg { display: block; flex: none; }
.defs { position: absolute; width: 0; height: 0; }

/* browser frame */
.browser { flex: none; background: linear-gradient(#8fadd1, #a9c4e4 32px); border-bottom: 3px double #7b8288; font-family: "Open Sans", "Noto Sans", sans-serif; font-size: 12px; }
.window-row { height: 27px; display: flex; justify-content: flex-end; gap: 2px; padding: 2px 1px 0 0; }
.win { width: 33px; height: 17px; border: 1px solid #43607f; border-radius: 2px; display: flex; align-items: center; justify-content: center; }
.win-min { background: linear-gradient(#9cc0dc 45%, #15659c 50%, #27bce8); border-color: #17435f; }
.win-max { background: linear-gradient(#b9cee8 45%, #94b3d3 50%, #b6cfea); }
.win-close { background: linear-gradient(#dc9890 45%, #ab2c1d 50%, #d46a55); border-color: #5b1820; }
.nav-row { height: 28px; display: flex; align-items: flex-end; }
.site-icon { margin: 0 12px 7px 5px; }
.address { width: 42%; height: 25px; margin: 0 5px 3px 1px; padding: 0 6px 0 4px; display: flex; align-items: center; gap: 7px; background: #e8eff7; border: 1px solid #72859d; box-shadow: inset 0 0 0 1px #f8fbff; }
.url { flex: 1; display: flex; color: #6b6e72; }
.url b { font-weight: 400; color: #000; }
.tab { width: 215px; height: 28px; padding: 0 6px 0 6px; display: flex; align-items: center; gap: 7px; border: 1px solid #72859d; border-bottom: 0; background: linear-gradient(#e6eefa, #fcfdff); }
.tab span { flex: 1; }
.new-tab { width: 31px; height: 28px; background: #dbe6f9; border: 1px solid #72859d; border-left: 0; border-bottom: 0; }
.tools { margin-left: auto; height: 28px; padding: 2px 7px 0 0; display: flex; gap: 8px; }

/* application */
.app { flex: 1; min-height: 0; display: flex; flex-direction: column; border-left: 1px solid #a0a0a0; border-right: 1px solid #a9a9a9; padding: 0 0 19px 4px; background: linear-gradient(90deg, #e9e9ec 4px, #fff 4px); }
.app-bar { flex: none; height: 29px; display: flex; align-items: center; padding: 1px 4px 0 4px; background: #0a2b8a; }
.ico { height: 28px; display: flex; align-items: center; justify-content: center; }
.lit { background: radial-gradient(circle, #6f9be8 0, #3a66c2 14px, #0a2b8a 22px); }
.w20 { width: 20px; }
.w26 { width: 26px; }
.w44 { width: 44px; }
.w50 { width: 50px; }
.w90 { width: 90px; }
.w96 { width: 96px; }
.search-text { width: 166px; height: 19px; margin: 2px 3px 0 4px; border: 1px solid #000; background: #fff; padding: 0 3px; }
.select-wrap { position: relative; width: 155px; height: 21px; margin: 2px 3px 0 0; }
.select-wrap select { appearance: none; width: 100%; height: 100%; border: 2px solid; border-color: #5a5a5a #d8d8d8 #d8d8d8 #5a5a5a; border-radius: 0; background: #fff; padding: 0 3px; font: 12px "Liberation Sans", Arial, sans-serif; color: #111; }
.select-arrow { position: absolute; right: 2px; top: 2px; width: 20px; height: 17px; border: 1px solid #777; background: #eee; display: flex; align-items: center; justify-content: center; pointer-events: none; }
.search-button { width: 91px; height: 20px; margin-top: 2px; background: #ebebeb; border: 1px solid #8a8a8a; color: #333; font-size: 13px; padding-bottom: 1px; }
.logout { margin-left: auto; padding-top: 3px; font: 14px "DejaVu Sans", Verdana, sans-serif; color: #d4def5; }
.main { flex: 1; min-height: 0; display: flex; overflow: hidden; }

/* report tree */
.sidebar { flex: none; width: 194px; border-right: 2px solid #808080; background: #f9f8ff; }
.sidebar h2 { margin: 0; height: 27px; padding: 0 6px; border-bottom: 1px solid #9090a8; background: linear-gradient(#fff 20%, #f2f1fb 50%, #b9b7cc); font: bold 12px/26px "DejaVu Sans", Verdana, sans-serif; }
.sidebar ul { padding: 6px 0 0 15px; }
.sidebar li { height: 20px; display: flex; align-items: center; gap: 11px; font: 11px "DejaVu Sans Condensed", Tahoma, sans-serif; }
.sidebar li svg { width: 12px; height: 12px; }
.sidebar .mine { margin-top: 17px; gap: 5px; font-family: "DejaVu Sans", Verdana, sans-serif; }

/* chart */
.content { flex: 1; min-width: 0; margin: 0 2px 0 4px; }
.chart { height: 345px; display: flex; align-items: flex-start; padding: 0 6px 0 6px; border: solid #c5622b; border-width: 0 1px 1px; box-shadow: inset 2px 0 #1f7dfa, inset -3px 0 #1f7dfa, inset 0 -3px #1f7dfa; }
.field { display: flex; align-items: center; justify-content: space-between; height: 16px; padding: 0 7px 0 4px; background: #ebebeb; border: 1px solid #9b9b9b; font: bold 13px/14px "DejaVu Sans", Verdana, sans-serif; }
.time-field { flex: none; width: 44px; justify-content: center; margin: 3px 163px 0 2px; padding: 0; font-size: 12px; }
.arrow { width: 8px; height: 5px; color: #000; }
.arrow.blue { color: #00f; }
.pie { margin-top: 4px; }
.pie-tags rect { fill: #fff; stroke: #000; }
.pie-tags text { font: 11px "Liberation Sans", Arial, sans-serif; text-anchor: middle; fill: #000; }
.legend { flex: none; margin: 29px 0 0 auto; min-width: 332px; }
.legend-fields { width: 134px; }
.legend-fields .field { width: 100%; }
.legend-fields .field + .field { border-top: 0; }
.legend-list { border: 1px solid #000; background: #fff; font-size: 11px; }
.legend-list li { height: 21px; display: flex; align-items: center; gap: 4px; padding: 0 5px; }
.legend-list i { width: 9px; height: 9px; border: 1px solid #000; }
.k1 { background: #6060f8; }
.k2 { background: #600f48; }
.k3 { background: #ffff8c; }
.k4 { background: #8fd6d6; }
.k5 { background: #480068; }
.k6 { background: #ff6a6e; }
.k7 { background: #10706e; }
.k8 { background: #acacff; }
.k9 { background: #000070; }
.k10 { background: #f0f; }
.k11 { background: #6ff; }

/* pivot table */
.pivot { width: 704px; margin: 0 auto; }
.pivot-tools { height: 23px; display: flex; align-items: center; background: #ebebeb; }
.pivot-tools button { width: 25px; height: 22px; display: flex; align-items: center; justify-content: center; }
.pivot-tools .on { background: #f7f7f7; border: 1px solid #8b8b8b; border-right-color: #fff; border-bottom-color: #fff; }
.sep { width: 8px; height: 19px; background: linear-gradient(90deg, transparent 4px, #999 4px, #999 5px, transparent 5px); }
.pivot table { width: 100%; table-layout: fixed; border-collapse: separate; border-spacing: 0; border-left: 1px solid #808080; border-top: 1px solid #808080; font-size: 14px; }
.c-type { width: 111px; }
.c-name { width: 226px; }
.c-task { width: 194px; }
.c-pm { width: 12px; }
.c-time { width: 34px; }
.pivot th, .pivot td { padding: 0 2px; text-align: left; vertical-align: top; white-space: nowrap; overflow: hidden; line-height: 17px; border: solid #999; border-width: 0 1px 1px 0; }
.pivot .title th { height: 18px; background: #376ba6; font: bold 13px/17px "DejaVu Sans", Verdana, sans-serif; }
.pivot .drop td { height: 17px; line-height: 16px; color: #999; }
.pivot .cols td { height: 18px; line-height: 17px; padding-right: 0; }
.pivot .heads th, .pivot .heads td { height: 17px; line-height: 15px; border-bottom: 2px solid #a8a8a8; background: #ebebeb; }
.pivot .heads th { font: bold 13px/15px "DejaVu Sans", Verdana, sans-serif; }
.heads div { display: flex; justify-content: space-between; align-items: center; height: 15px; padding-right: 2px; }
.pivot .heads .time { font: 12px/14px "DejaVu Sans", Verdana, sans-serif; border-bottom: 1px solid #ccc; }
.pivot .rest, .pivot .heads .rest { background: #fff; border-bottom: 0; }
.pivot tbody td { height: 19px; }
.pivot tbody .first td { height: 18px; }
.type, .name, .member { background: #ebebeb; }
.pivot .type, .pivot .name { border-right: 2px solid #b5b5b5; border-bottom-color: #aaa; }
.pivot .type { font: 12px/15px "DejaVu Sans", Verdana, sans-serif; }
.type button, .name button { display: inline-block; vertical-align: -2px; margin: 0 4px 0 1px; }
.type svg, .name svg { width: 10px; height: 10px; }
.pivot .type button { vertical-align: -3px; }
.pivot .pm { padding: 0; background: #ebebeb; }
.pm button { display: block; width: 100%; height: 8px; font: bold 9px/8px "DejaVu Sans", sans-serif; text-align: center; overflow: hidden; }
.pm button:first-child { height: 9px; border-bottom: 1px solid #aaa; }
.pivot .num { text-align: right; background: #fff; padding-right: 1px; border-color: #ddd; font: 11px/16px "DejaVu Sans", Verdana, sans-serif; }
.pivot .total { font: 13px/18px "Liberation Sans", Arial, sans-serif; }

/* scrollbar */
.scrollbar { flex: none; width: 18px; display: flex; flex-direction: column; background: #ebebeb; padding: 0 1px; }
.scrollbar button { height: 44px; display: flex; align-items: center; justify-content: center; }
.before { flex: 103; }
.thumb { flex: 373; background: #c2c2c2; }
.after { flex: 67; }

/* status bar */
.status { flex: none; height: 21px; display: flex; background: #f9f8ff; border: 1px solid #a0a0a0; border-width: 0 1px 2px; border-bottom-color: #707780; box-shadow: inset 0 1px #ddd; }
.status > * { padding: 4px 0 0 6px; line-height: 16px; height: 19px; border-right: 1px solid #ddd; display: flex; gap: 8px; align-items: center; white-space: nowrap; }
.s1 { width: 131px; }
.s2 { width: 163px; }
.s3 { width: 150px; }
.s4 { flex: 1; }
.s5 { width: 270px; }
.s6 { width: 213px; }
.s7 { width: 50px; }
.s8 { width: 37px; }
.status .s8 { border-right: 0; }

/* taskbar */
.taskbar { flex: none; height: 42px; display: flex; align-items: center; padding-left: 8px; background: linear-gradient(90deg, #6c809a 40px, #97afd5 150px, #97afd5 1000px, transparent 1000px), linear-gradient(270deg, #6c809a 175px, #97afd5 215px); border-bottom: 1px solid #eef2f8; }
.start { width: 40px; margin-right: 21px; }
.pin { width: 58px; margin-right: 9px; display: flex; padding-left: 9px; }
.pin.last { margin-right: 3px; }
.task { width: 64px; height: 40px; margin-right: 3px; display: flex; align-items: center; justify-content: center; border: 1px solid #4a5f80; border-radius: 3px; box-shadow: inset 0 0 0 1px #c4d5ec; background: linear-gradient(135deg, #c3d3eb, #8fa9cf); }
.task.active { background: linear-gradient(135deg, #f2f6fb, #bccfe9); }
.task.stack { padding-right: 10px; background: linear-gradient(90deg, transparent 54px, #52688a 54px, #52688a 55px, transparent 55px, transparent 58px, #52688a 58px, #52688a 59px, transparent 59px), linear-gradient(135deg, #c3d3eb, #8fa9cf); }
.tray { margin-left: auto; display: flex; align-items: center; height: 100%; color: #fff; }
.speaker { margin: 0 13px 0 18px; }
.tray time { margin: 0 6px 0 15px; text-align: center; font: 12px/18px "Open Sans", "Noto Sans", sans-serif; }
.desktop { width: 15px; height: 40px; border: 1px solid #3c4b62; background: linear-gradient(160deg, #8797ab, #3f5068 60%, #6c7f98); }
```
